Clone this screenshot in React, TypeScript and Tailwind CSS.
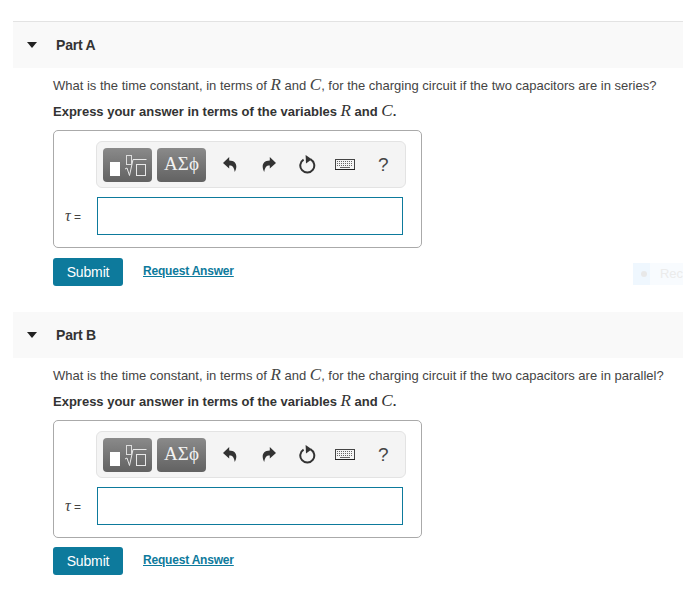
const sans = { fontFamily: '"Liberation Sans", Arial, sans-serif' };

function V({ children }: { children: string }) {
  return <span className="font-['Liberation_Serif',serif] italic font-normal text-[17px] leading-none">{children}</span>;
}

function ArrowIcon({ flip }: { flip?: boolean }) {
  return (
    <svg width="14" height="15" viewBox="0 0 14 15" className={flip ? '-mt-[1px] -scale-x-100' : '-mt-[1px]'}>
      <path d="M6.2 0 L0 6 L6.2 11.6 V8.4 C9.4 8.2 11 10 11.8 15 C14.6 9.6 14 3.8 6.2 3.6 Z" fill="#333" />
    </svg>
  );
}

function ResetIcon() {
  return (
    <svg width="17" height="19" viewBox="0 0 17 19">
      <path d="M4.6 4.6 A7 7 0 1 0 11.6 4.4" fill="none" stroke="#333" strokeWidth="2" />
      <path d="M6.6 0 L12.8 4.2 L7 8.4 Z" fill="#333" />
    </svg>
  );
}

function KeyboardIcon() {
  return (
    <svg width="20" height="11" viewBox="0 0 20 11" className="-mt-[1px]">
      <rect x="0.5" y="0.5" width="19" height="10" fill="#f4f4f4" stroke="#444" />
      <path d="M0 10.5h20" stroke="#222" />
      <path d="M2 2.5h16M2 4.5h16M2 6.5h16" stroke="#666" strokeDasharray="1 1" />
      <path d="M5 8.5h10" stroke="#666" />
    </svg>
  );
}

function Toolbar() {
  return (
    <div className="flex items-center h-[47px] w-[310px] ml-[42px] bg-[#f4f4f4] border border-[#e3e3e3] rounded-[6px] pl-[6px]">
      <div className="flex items-center w-[49px] h-[34px] pl-[7px] rounded-[4px] bg-gradient-to-b from-[#8a8a8a] to-[#626262]">
        <div className="w-[10px] h-[14px] bg-white mt-[9px]" />
        <svg width="23" height="22" viewBox="0 0 23 22" className="ml-[4px] mt-[2px] shrink-0">
          <path d="M1 14 L3 13 L5.5 20.5 L9 4.5 H22.5" fill="none" stroke="#e8e8e8" strokeWidth="1" />
          <rect x="2.5" y="0.5" width="5" height="9" fill="none" stroke="#ddd" />
          <rect x="12.5" y="9.5" width="9" height="11" fill="none" stroke="#e8e8e8" />
        </svg>
      </div>
      <div className="flex items-center justify-center w-[49px] h-[34px] ml-[5px] rounded-[4px] bg-gradient-to-b from-[#8a8a8a] to-[#626262] text-[#f2f2f2] text-[19px] font-['Liberation_Serif',serif]">
        ΑΣϕ
      </div>
      <div className="ml-[17px] w-[14px] flex justify-center"><ArrowIcon /></div>
      <div className="ml-[25px] w-[14px] flex justify-center"><ArrowIcon flip /></div>
      <div className="ml-[23px] w-[17px] flex justify-center"><ResetIcon /></div>
      <div className="ml-[19px] w-[20px] flex justify-center"><KeyboardIcon /></div>
      <div className="ml-[23px] text-[19px] leading-none -mt-[1px] text-[#444]" style={sans}>?</div>
    </div>
  );
}

function Part({ name, mode, submitGap }: { name: string; mode: string; submitGap: string }) {
  return (
    <section>
      <div className="flex items-center h-[46px] bg-[#f9f9f9] ml-[13px]">
        <div className="ml-[14px] w-0 h-0 border-x-[5px] border-x-transparent border-t-[6px] border-t-[#222]" />
        <h3 className="ml-[19px] text-[14px] font-bold text-[#333] tracking-[-0.2px]">{name}</h3>
      </div>
      <div className="ml-[53px] mt-[8px]">
        <p className="text-[13px] leading-[20px] h-[20px] whitespace-nowrap text-[#444]">
          What is the time constant, in terms of <V>R</V> and <V>C</V>, for the charging circuit if the two capacitors are in {mode}?
        </p>
        <p className="text-[13px] leading-[20px] mt-[6px] font-bold text-[#333] whitespace-nowrap">
          Express your answer in terms of the variables <V>R</V> and <V>C</V>.
        </p>
        <div className="w-[369px] h-[118px] mt-[8px] border border-[#aaa] rounded-[5px] pt-[10px]">
          <Toolbar />
          <div className="flex items-center mt-[9px]">
            <span className="w-[43px] pl-[11px] text-[12px] text-[#444] whitespace-nowrap">
              <span className="font-['Liberation_Serif',serif] italic text-[16px]">τ</span> =
            </span>
            <div className="w-[306px] h-[38px] border border-[#0d7a9c] bg-white" />
          </div>
        </div>
        <div className={`flex items-center ${submitGap}`}>
          <button className="w-[70px] h-[28px] rounded-[3px] bg-[#0d7a9c] text-white text-[14px] tracking-[-0.15px]">Submit</button>
          <a className="ml-[20px] mb-[2px] text-[12px] font-bold text-[#0d7a9c] underline tracking-[-0.2px]">Request Answer</a>
        </div>
      </div>
    </section>
  );
}

export default function App() {
  return (
    <div className="relative w-[683px] h-[589px] overflow-hidden bg-white pt-[21px]" style={sans}>
      <div className="ml-[13px] border-t border-[#e3e3e3]" />
      <Part name="Part A" mode="series" submitGap="mt-[10px]" />
      <div className="h-[26px]" />
      <Part name="Part B" mode="parallel" submitGap="mt-[9px]" />
      <div className="absolute left-[633px] top-[263px] w-[50px] h-[22px] flex items-center bg-[#f8fbfe]">
        <div className="flex items-center w-[22px] h-full bg-[#eff7fe]">
          <div className="ml-[8px] w-[6px] h-[6px] rounded-full bg-[#e8e8e8]" />
        </div>
        <span className="ml-[10px] text-[13px] text-[#ebebeb] whitespace-nowrap">Rec</span>
      </div>
    </div>
  );
}
